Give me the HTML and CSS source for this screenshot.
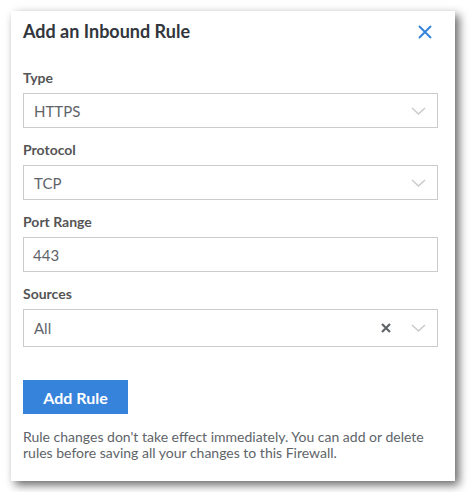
FILE: index.html
```html
<!DOCTYPE html>
<html lang="en">
<head>
  <meta charset="UTF-8" />
  <meta name="viewport" content="width=device-width,initial-scale=1.0" />
  <title>Add an Inbound Rule</title>
  <link rel="stylesheet" href="styles.css">
</head>
<body>
  <div class="drawer">
    <div class="drawer-header">
      <h2>Add an Inbound Rule</h2>
      <button class="btn-close" aria-label="Close">
        <svg width="14" height="14" viewBox="0 0 14 14">
          <path d="M1 1L13 13M13 1L1 13" stroke="#3683dc" stroke-width="2" fill="none" />
        </svg>
      </button>
    </div>

    <div class="field">
      <label>Type</label>
      <div class="select">
        <span class="value">HTTPS</span>
        <span class="chevron"><svg width="15" height="8" viewBox="0 0 15 8"><path d="M1 1L7.5 7L14 1" stroke="#c9cacb" stroke-width="1.5" fill="none" /></svg></span>
      </div>
    </div>

    <div class="field">
      <label>Protocol</label>
      <div class="select">
        <span class="value">TCP</span>
        <span class="chevron"><svg width="15" height="8" viewBox="0 0 15 8"><path d="M1 1L7.5 7L14 1" stroke="#c9cacb" stroke-width="1.5" fill="none" /></svg></span>
      </div>
    </div>

    <div class="field">
      <label>Port Range</label>
      <div class="input">
        <span class="value">443</span>
      </div>
    </div>

    <div class="field">
      <label>Sources</label>
      <div class="select multi">
        <span class="value">All</span>
        <span class="clear"><svg width="10" height="10" viewBox="0 0 10 10"><path d="M1 1L9 9M9 1L1 9" stroke="#606469" stroke-width="2.2" fill="none" /></svg></span>
        <span class="chevron"><svg width="15" height="8" viewBox="0 0 15 8"><path d="M1 1L7.5 7L14 1" stroke="#c9cacb" stroke-width="1.5" fill="none" /></svg></span>
      </div>
    </div>

    <div class="actions">
      <button class="btn-primary">Add Rule</button>
    </div>

    <p class="note">Rule changes don't take effect immediately. You can add or delete rules before saving all your changes to this Firewall.</p>
  </div>
</body>
</html>
```

FILE: styles.css
```css
body {
  font-family: Lato, "Open Sans", sans-serif;
  background-color: #fff;
  margin: 0;
  padding: 11px;
  color: #32363c;
}
.drawer {
  width: 444px;
  height: 470px;
  box-sizing: border-box;
  background-color: #fff;
  padding: 9px 17px 0 12px;
  box-shadow: 4px 4px 9px rgba(0,0,0,0.6);
}
.drawer-header {
  display: flex;
  justify-content: space-between;
  align-items: center;
  margin-bottom: 27px;
}
.drawer-header h2 {
  margin: 0;
  font-size: 18px;
  line-height: 22px;
  font-weight: 700;
  color: #32363c;
}
.btn-close {
  border: none;
  background: none;
  padding: 0;
  margin-right: 6px;
  margin-top: 2px;
  width: 14px;
  height: 14px;
  display: flex;
  cursor: pointer;
}
.field { margin-bottom: 13px; }
.field label {
  display: block;
  font-size: 14px;
  line-height: 18px;
  font-weight: 700;
  color: #555;
  margin-bottom: 6px;
}
.select, .input {
  display: flex;
  align-items: center;
  height: 35px;
  box-sizing: border-box;
  border: 1px solid #ccc;
  padding: 0 11px 0 10px;
  font-size: 15px;
  color: #606469;
}
.select.multi { height: 38px; }
.value { flex: 1; }
.input .value { margin-left: -1px; }
.chevron { display: flex; margin-left: 10px; }
.clear { display: flex; margin-right: 10px; }
.actions { margin-top: 33px; }
.btn-primary {
  height: 34px;
  width: 105px;
  border: none;
  background-color: #3683dc;
  color: #fff;
  font-family: Lato, sans-serif;
  font-size: 16px;
  font-weight: 700;
  cursor: pointer;
}
.note {
  margin: 15px 0 0;
  font-size: 14px;
  line-height: 16px;
  color: #606469;
}
```
